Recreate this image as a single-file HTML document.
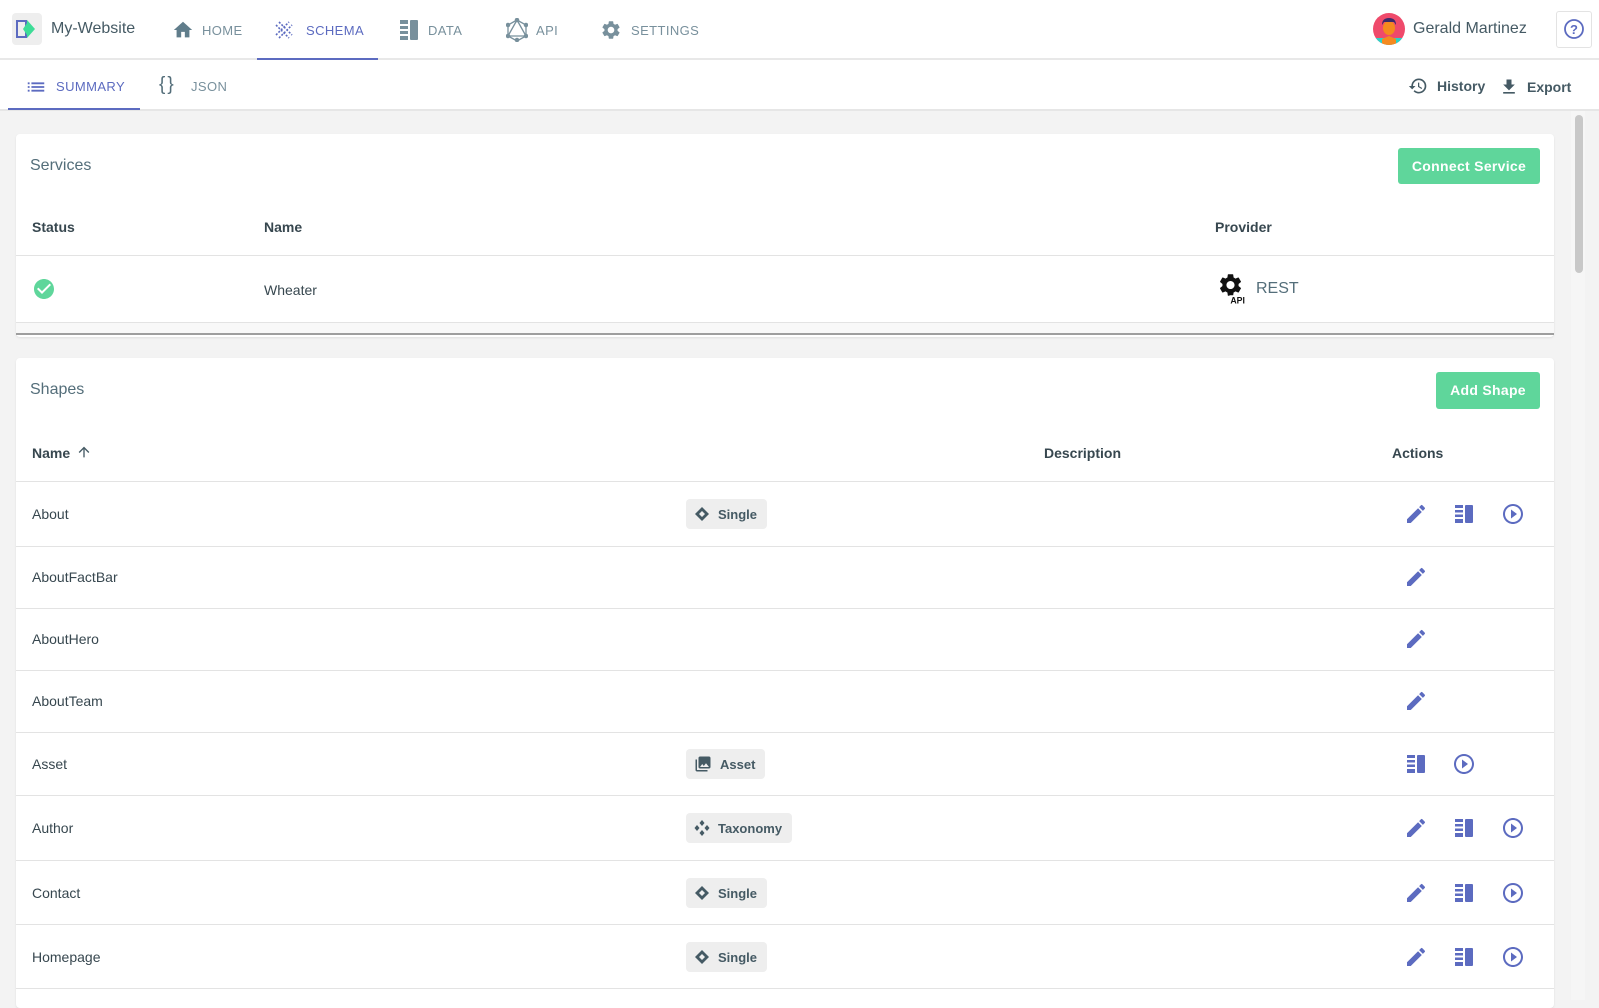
<!DOCTYPE html>
<html><head><meta charset="utf-8"><style>
*{box-sizing:border-box;margin:0;padding:0}
body{width:1599px;height:1000px;overflow:hidden;background:#f3f3f3;font-family:"Liberation Sans",sans-serif;color:#455a64;position:relative}
.abs{position:absolute}
.top{left:0;top:0;width:1599px;height:60px;background:#fff;border-bottom:2px solid #e8e8e8}
.sub{left:0;top:60px;width:1599px;height:51px;background:#fff;border-bottom:2px solid #e6e6e6}
.nav{font-size:13px;letter-spacing:.4px;color:#78909c;font-weight:500}
.card{background:#fff;border-radius:4px;left:16px;width:1538px}
.th{font-size:14px;font-weight:bold;color:#37474f}
.td{font-size:14px;color:#37474f}
.line{left:0;width:1538px;height:1px;background:#e3e3e3}
.btn{background:#5fd69b;color:#fff;font-size:14px;font-weight:bold;border-radius:3px;text-align:center;letter-spacing:.3px}
.chip{left:670px;height:30px;background:#eee;border-radius:4px;font-size:13px;font-weight:bold;color:#455a64;display:flex;align-items:center;padding:0 10px 0 8px;gap:8px}
svg{display:block}
</style></head><body>
<div class="abs top"></div>
<div class="abs" style="left:12px;top:13px;width:30px;height:32px;background:#eee;border-radius:4px"></div>
<svg class="abs" style="left:16px;top:19px" width="22" height="20" viewBox="0 0 22 20"><rect x="1" y="2" width="9" height="16" fill="none" stroke="#5c6bc0" stroke-width="2"/><path d="M11 1l8 9-8 9z" fill="#3ddc97"/><path d="M11 4l-4 6 4 6z" fill="#3ddc97"/></svg>
<div class="abs" style="left:51px;top:20px;font-size:16px;color:#455a64">My-Website</div>
<svg class="abs" style="left:172px;top:19px" width="22" height="22" viewBox="0 0 24 24"><path fill="#607d8b" d="M10 20v-6h4v6h5v-8h3L12 3 2 12h3v8z"/></svg>
<div class="abs nav" style="left:202px;top:23px">HOME</div>
<svg class="abs" style="left:273px;top:19px" width="22" height="22" viewBox="0 0 22 22" stroke="#5c6bc0" stroke-width="1.6" stroke-dasharray="2 1.5"><path d="M3 6l13 13M6 3l13 13M3 16L16 3M6 19L19 6"/></svg>
<div class="abs nav" style="left:306px;top:23px;color:#5c6bc0">SCHEMA</div>
<div class="abs" style="left:257px;top:58px;width:121px;height:2px;background:#5c6bc0"></div>
<svg class="abs" style="left:399px;top:19px" width="20" height="22" viewBox="0 0 20 22" fill="#78909c"><rect x="1" y="1" width="8" height="4"/><rect x="1" y="7" width="8" height="3"/><rect x="1" y="12" width="8" height="3"/><rect x="1" y="17" width="8" height="4"/><rect x="11" y="1" width="8" height="20" rx="1"/></svg>
<div class="abs nav" style="left:428px;top:23px">DATA</div>
<svg class="abs" style="left:506px;top:18px" width="22" height="24" viewBox="0 0 22 24" fill="none" stroke="#78909c" stroke-width="1.3"><path d="M11 2L2 18h18z"/><path d="M11 2L2 7v11l9 5 9-5V7z"/><circle cx="11" cy="2" r="1.6" fill="#78909c"/><circle cx="2" cy="7" r="1.6" fill="#78909c"/><circle cx="20" cy="7" r="1.6" fill="#78909c"/><circle cx="2" cy="18" r="1.6" fill="#78909c"/><circle cx="20" cy="18" r="1.6" fill="#78909c"/><circle cx="11" cy="22" r="1.6" fill="#78909c"/></svg>
<div class="abs nav" style="left:536px;top:23px">API</div>
<svg class="abs" style="left:600px;top:19px" width="22" height="22" viewBox="0 0 24 24"><path fill="#78909c" d="M19.14 12.94c.04-.3.06-.61.06-.94 0-.32-.02-.64-.07-.94l2.03-1.58a.49.49 0 0 0 .12-.61l-1.92-3.32a.488.488 0 0 0-.59-.22l-2.39.96c-.5-.38-1.03-.7-1.62-.94l-.36-2.54a.484.484 0 0 0-.48-.41h-3.84c-.24 0-.43.17-.47.41l-.36 2.54c-.59.24-1.13.57-1.62.94l-2.39-.96c-.22-.08-.47 0-.59.22L2.74 8.87c-.12.21-.08.47.12.61l2.03 1.58c-.05.3-.09.63-.09.94s.02.64.07.94l-2.03 1.58a.49.49 0 0 0-.12.61l1.92 3.32c.12.22.37.29.59.22l2.39-.96c.5.38 1.030.7 1.62.94l.36 2.54c.05.24.24.41.48.41h3.84c.24 0 .44-.17.47-.41l.36-2.54c.59-.24 1.13-.56 1.62-.94l2.39.96c.22.08.47 0 .59-.22l1.92-3.32c.12-.22.07-.47-.12-.61l-2.01-1.58zM12 15.6c-1.98 0-3.6-1.62-3.6-3.6s1.62-3.6 3.6-3.6 3.6 1.62 3.6 3.6-1.62 3.6-3.6 3.6z"/></svg>
<div class="abs nav" style="left:631px;top:23px">SETTINGS</div>
<svg class="abs" style="left:1373px;top:13px" width="32" height="32" viewBox="0 0 32 32"><clipPath id="c"><circle cx="16" cy="16" r="16"/></clipPath><g clip-path="url(#c)"><rect width="32" height="32" fill="#ef4a6b"/><rect y="25" width="32" height="7" fill="#2ad3c8"/><path d="M9 32v-6l7-3 7 3v6z" fill="#f58a1f"/><ellipse cx="16" cy="15" rx="6" ry="7" fill="#f58a1f"/><path d="M9 12q0-7 7-7t7 7l-2-3h-10z" fill="#3a2b6b"/></g></svg>
<div class="abs" style="left:1413px;top:20px;font-size:16px;color:#455a64">Gerald Martinez</div>
<div class="abs" style="left:1556px;top:11px;width:36px;height:37px;border:1px solid #e3e3e3;border-radius:3px;background:#fff"></div>
<svg class="abs" style="left:1563px;top:18px" width="22" height="22" viewBox="0 0 22 22"><circle cx="11" cy="11" r="9" fill="none" stroke="#5c6bc0" stroke-width="1.8"/><text x="11" y="16" text-anchor="middle" font-size="13" font-family="Liberation Sans" font-weight="bold" fill="#5c6bc0">?</text></svg>

<div class="abs sub"></div>
<svg class="abs" style="left:25px;top:76px" width="22" height="22" viewBox="0 0 24 24"><path fill="#5c6bc0" d="M3 13h2v-2H3v2zm0 4h2v-2H3v2zm0-8h2V7H3v2zm4 4h14v-2H7v2zm0 4h14v-2H7v2zM7 7v2h14V7H7z"/></svg>
<div class="abs nav" style="left:56px;top:79px;color:#5c6bc0">SUMMARY</div>
<div class="abs" style="left:8px;top:108px;width:132px;height:2px;background:#5c6bc0"></div>
<div class="abs" style="left:159px;top:74px;font-size:19px;color:#546e7a;letter-spacing:2px">{}</div>
<div class="abs nav" style="left:191px;top:79px">JSON</div>
<svg class="abs" style="left:1408px;top:76px" width="20" height="20" viewBox="0 0 24 24"><path fill="#455a64" d="M13 3a9 9 0 0 0-9 9H1l3.89 3.89.07.14L9 12H6c0-3.87 3.13-7 7-7s7 3.13 7 7-3.13 7-7 7c-1.93 0-3.68-.79-4.94-2.06l-1.42 1.42A8.954 8.954 0 0 0 13 21a9 9 0 0 0 0-18zm-1 5v5l4.28 2.54.72-1.21-3.5-2.08V8H12z"/></svg>
<div class="abs" style="left:1437px;top:78px;font-size:14px;font-weight:bold;color:#455a64">History</div>
<svg class="abs" style="left:1499px;top:77px" width="20" height="20" viewBox="0 0 24 24"><path fill="#455a64" d="M19 9h-4V3H9v6H5l7 7 7-7zM5 18v2h14v-2H5z"/></svg>
<div class="abs" style="left:1527px;top:79px;font-size:14px;font-weight:bold;color:#455a64">Export</div>

<div class="abs" style="left:1571px;top:111px;width:14px;height:889px;background:#f6f6f6"></div>
<div class="abs" style="left:1575px;top:115px;width:8px;height:158px;background:#c8c8c8;border-radius:4px"></div>

<div class="abs card" style="top:134px;height:203px;box-shadow:0 1px 2px rgba(0,0,0,.08)">
 <div class="abs" style="left:14px;top:23px;font-size:16px;color:#546e7a">Services</div>
 <div class="abs btn" style="left:1382px;top:14px;width:142px;height:36px;line-height:36px">Connect Service</div>
 <div class="abs th" style="left:16px;top:85px">Status</div>
 <div class="abs th" style="left:248px;top:85px">Name</div>
 <div class="abs th" style="left:1199px;top:85px">Provider</div>
 <div class="abs line" style="top:121px"></div>
 <svg class="abs" style="left:16px;top:143px" width="24" height="24" viewBox="0 0 24 24"><path fill="#5fd69b" d="M12 2C6.48 2 2 6.48 2 12s4.48 10 10 10 10-4.48 10-10S17.52 2 12 2zm-2 15l-5-5 1.41-1.41L10 14.17l7.59-7.59L19 8l-9 9z"/></svg>
 <div class="abs td" style="left:248px;top:148px">Wheater</div>
 <svg class="abs" style="left:1201px;top:140px" width="30" height="30" viewBox="0 0 24 24"><path fill="#111" transform="translate(0,-2) scale(.9)" d="M19.14 12.94c.04-.3.06-.61.06-.94 0-.32-.02-.64-.07-.94l2.03-1.58a.49.49 0 0 0 .12-.61l-1.92-3.32a.488.488 0 0 0-.59-.22l-2.39.96c-.5-.38-1.03-.7-1.62-.94l-.36-2.54a.484.484 0 0 0-.48-.41h-3.84c-.24 0-.43.17-.47.41l-.36 2.54c-.59.24-1.130.57-1.62.94l-2.39-.96c-.22-.08-.47 0-.59.22L2.74 8.87c-.12.21-.08.47.12.61l2.03 1.58c-.05.3-.09.63-.09.94s.02.64.07.94l-2.03 1.58a.49.49 0 0 0-.12.61l1.92 3.32c.12.22.37.29.59.22l2.39-.96c.5.38 1.03.7 1.62.94l.36 2.54c.05.24.24.41.48.41h3.84c.24 0 .44-.17.47-.41l.36-2.54c.59-.24 1.13-.56 1.62-.94l2.39.96c.22.08.47 0 .59-.22l1.92-3.32c.12-.22.07-.47-.12-.61l-2.01-1.58zM12 15.6c-1.98 0-3.6-1.62-3.6-3.6s1.62-3.6 3.6-3.6 3.6 1.62 3.6 3.6-1.62 3.6-3.6 3.6z"/><rect x="10" y="17" width="13" height="7" fill="#fff"/><text x="16.5" y="23.5" text-anchor="middle" font-size="7" font-weight="bold" font-family="Liberation Sans" fill="#111">API</text></svg>
 <div class="abs" style="left:1240px;top:146px;font-size:16px;color:#546e7a">REST</div>
 <div class="abs" style="left:0;top:188px;width:1538px;height:13px;background:#f8f8f8;border-top:1px solid #e3e3e3;border-bottom:2px solid #9e9e9e"></div>
</div>

<div class="abs card" style="top:358px;height:650px;box-shadow:0 1px 2px rgba(0,0,0,.08)">
 <div class="abs" style="left:14px;top:23px;font-size:16px;color:#546e7a">Shapes</div>
 <div class="abs btn" style="left:1420px;top:14px;width:104px;height:37px;line-height:37px">Add Shape</div>
 <div class="abs th" style="left:16px;top:87px">Name</div>
 <svg class="abs" style="left:60px;top:86px" width="16" height="16" viewBox="0 0 24 24"><path fill="#455a64" d="M4 12l1.41 1.41L11 7.83V20h2V7.83l5.58 5.59L20 12l-8-8-8 8z"/></svg>
 <div class="abs th" style="left:1028px;top:87px">Description</div>
 <div class="abs th" style="left:1376px;top:87px">Actions</div>
 <div class="abs line" style="top:123px"></div>
</div>

<!-- rows (absolute to page) -->
<div id="rows"></div>
<svg width="0" height="0" style="position:absolute"><defs>
<g id="pen"><path fill="#5c6bc0" d="M3 17.25V21h3.75L17.81 9.94l-3.75-3.75L3 17.25zM20.71 7.04c.39-.39.39-1.020 0-1.41l-2.34-2.34a.996.996 0 0 0-1.41 0l-1.83 1.83 3.75 3.75 1.83-1.83z"/></g>
<g id="col" fill="#5c6bc0"><rect x="3" y="3" width="8" height="3"/><rect x="3" y="8" width="8" height="2.5"/><rect x="3" y="12.5" width="8" height="2.5"/><rect x="3" y="17" width="8" height="4"/><rect x="13" y="3" width="8" height="18" rx="1"/></g>
<g id="play"><path fill="#5c6bc0" d="M10 16.5l6-4.5-6-4.5v9zM12 2C6.48 2 2 6.48 2 12s4.48 10 10 10 10-4.48 10-10S17.52 2 12 2zm0 18c-4.41 0-8-3.59-8-8s3.59-8 8-8 8 3.59 8 8-3.59 8-8 8z"/></g>
</defs></svg>

<div class="abs" style="left:16px;top:546px;width:1538px;height:1px;background:#e3e3e3"></div>
<div class="abs" style="left:16px;top:608px;width:1538px;height:1px;background:#e3e3e3"></div>
<div class="abs" style="left:16px;top:670px;width:1538px;height:1px;background:#e3e3e3"></div>
<div class="abs" style="left:16px;top:732px;width:1538px;height:1px;background:#e3e3e3"></div>
<div class="abs" style="left:16px;top:795px;width:1538px;height:1px;background:#e3e3e3"></div>
<div class="abs" style="left:16px;top:860px;width:1538px;height:1px;background:#e3e3e3"></div>
<div class="abs" style="left:16px;top:924px;width:1538px;height:1px;background:#e3e3e3"></div>
<div class="abs" style="left:16px;top:988px;width:1538px;height:1px;background:#e3e3e3"></div>

<div class="abs td" style="left:32px;top:506px">About</div>
<div class="abs td" style="left:32px;top:569px">AboutFactBar</div>
<div class="abs td" style="left:32px;top:631px">AboutHero</div>
<div class="abs td" style="left:32px;top:693px">AboutTeam</div>
<div class="abs td" style="left:32px;top:756px">Asset</div>
<div class="abs td" style="left:32px;top:820px">Author</div>
<div class="abs td" style="left:32px;top:885px">Contact</div>
<div class="abs td" style="left:32px;top:949px">Homepage</div>

<div class="abs chip" style="left:686px;top:499px"><svg width="16" height="16" viewBox="0 0 16 16"><path d="M8 1l7 7-7 7-7-7z" fill="#455a64"/><path d="M8 5l3 3-3 3-3-3z" fill="#eee"/></svg>Single</div>
<div class="abs chip" style="left:686px;top:749px"><svg width="18" height="18" viewBox="0 0 24 24"><path fill="#455a64" d="M22 16V4c0-1.1-.9-2-2-2H8c-1.1 0-2 .9-2 2v12c0 1.1.9 2 2 2h12c1.1 0 2-.9 2-2zm-11-4l2.03 2.71L16 11l4 5H8l3-4zM2 6v14c0 1.1.9 2 2 2h14v-2H4V6H2z"/></svg>Asset</div>
<div class="abs chip" style="left:686px;top:813px"><svg width="16" height="16" viewBox="0 0 16 16" fill="#455a64"><path d="M8 0l2.5 3L8 6 5.5 3z"/><path d="M8 10l2.5 3L8 16l-2.5-3z"/><path d="M3 5l2.5 3L3 11 .5 8z"/><path d="M13 5l2.5 3-2.5 3-2.5-3z"/></svg>Taxonomy</div>
<div class="abs chip" style="left:686px;top:878px"><svg width="16" height="16" viewBox="0 0 16 16"><path d="M8 1l7 7-7 7-7-7z" fill="#455a64"/><path d="M8 5l3 3-3 3-3-3z" fill="#eee"/></svg>Single</div>
<div class="abs chip" style="left:686px;top:942px"><svg width="16" height="16" viewBox="0 0 16 16"><path d="M8 1l7 7-7 7-7-7z" fill="#455a64"/><path d="M8 5l3 3-3 3-3-3z" fill="#eee"/></svg>Single</div>

<!-- action icons -->
<svg class="abs" style="left:1404px;top:502px" width="24" height="24"><use href="#pen"/></svg>
<svg class="abs" style="left:1452px;top:502px" width="24" height="24"><use href="#col"/></svg>
<svg class="abs" style="left:1501px;top:502px" width="24" height="24"><use href="#play"/></svg>
<svg class="abs" style="left:1404px;top:565px" width="24" height="24"><use href="#pen"/></svg>
<svg class="abs" style="left:1404px;top:627px" width="24" height="24"><use href="#pen"/></svg>
<svg class="abs" style="left:1404px;top:689px" width="24" height="24"><use href="#pen"/></svg>
<svg class="abs" style="left:1404px;top:752px" width="24" height="24"><use href="#col"/></svg>
<svg class="abs" style="left:1452px;top:752px" width="24" height="24"><use href="#play"/></svg>
<svg class="abs" style="left:1404px;top:816px" width="24" height="24"><use href="#pen"/></svg>
<svg class="abs" style="left:1452px;top:816px" width="24" height="24"><use href="#col"/></svg>
<svg class="abs" style="left:1501px;top:816px" width="24" height="24"><use href="#play"/></svg>
<svg class="abs" style="left:1404px;top:881px" width="24" height="24"><use href="#pen"/></svg>
<svg class="abs" style="left:1452px;top:881px" width="24" height="24"><use href="#col"/></svg>
<svg class="abs" style="left:1501px;top:881px" width="24" height="24"><use href="#play"/></svg>
<svg class="abs" style="left:1404px;top:945px" width="24" height="24"><use href="#pen"/></svg>
<svg class="abs" style="left:1452px;top:945px" width="24" height="24"><use href="#col"/></svg>
<svg class="abs" style="left:1501px;top:945px" width="24" height="24"><use href="#play"/></svg>
</body></html>
